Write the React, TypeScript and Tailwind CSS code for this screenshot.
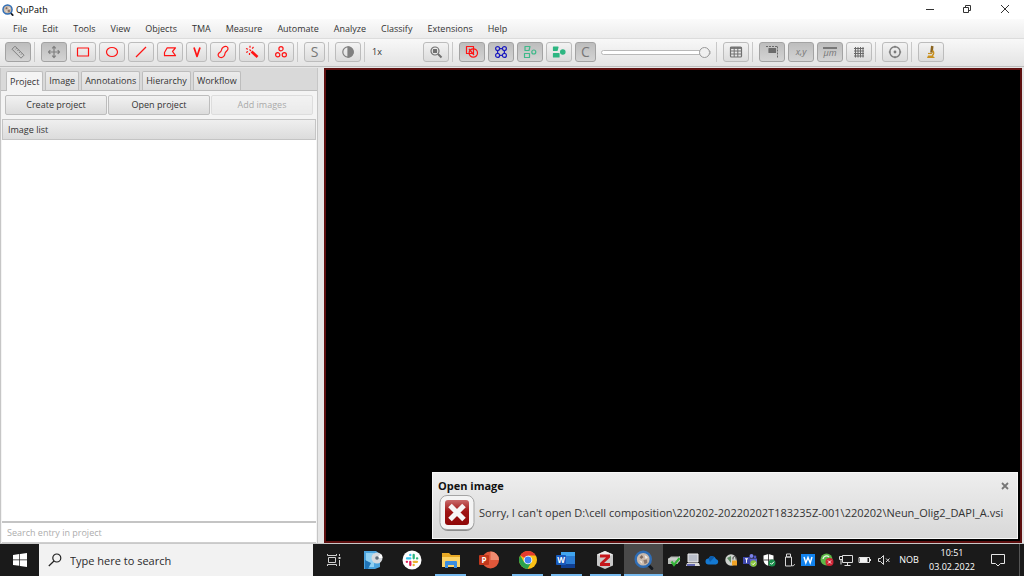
import { ReactNode, useState } from "react";
import clsx from "clsx";

const menus = [
  "File", "Edit", "Tools", "View", "Objects", "TMA", "Measure",
  "Automate", "Analyze", "Classify", "Extensions", "Help",
];

const tabs = ["Project", "Image", "Annotations", "Hierarchy", "Workflow"];

interface IconProps {
  children: ReactNode;
  color?: string;
}

/* 14px line icon used on the toolbar */
function Icon({ children, color = "text-[#ff1414]" }: IconProps) {
  return (
    <svg
      viewBox="0 0 14 14"
      className={clsx("w-3.5 h-3.5", color)}
      fill="none"
      stroke="currentColor"
      strokeWidth="1.2"
      strokeLinejoin="round"
      aria-hidden="true"
    >
      {children}
    </svg>
  );
}

interface ToolProps {
  label: string;
  children: ReactNode;
  pressed?: boolean;
  narrow?: boolean;
}

function Tool({ label, children, pressed, narrow }: ToolProps) {
  return (
    <button
      aria-label={label}
      aria-pressed={pressed}
      className={clsx(
        "h-5 shrink-0 flex items-center justify-center rounded-[3px] border",
        narrow ? "w-[21px]" : "w-[26px]",
        pressed
          ? "border-[#a3a3a3] bg-linear-to-b from-[#bdbdbd] to-[#d4d4d4]"
          : "border-[#bcbcbc] bg-linear-to-b from-[#f3f3f3] to-[#dcdcdc]"
      )}
    >
      {children}
    </button>
  );
}

function Divider() {
  return <div className="w-1 h-5 shrink-0 border-l border-[#c8c8c8]" />;
}

function QuPathLogo({ className }: { className: string }) {
  return (
    <svg viewBox="0 0 18 18" className={className} aria-hidden="true">
      <path d="M12.5 13l3.6 3.6" stroke="#15191f" strokeWidth="2.6" strokeLinecap="round" />
      <circle cx="8.3" cy="8.3" r="6.8" fill="#c9b9ab" stroke="#2f6db5" strokeWidth="2.2" />
      <path d="M5 6.5l2-2 1.5 2L6.5 8z" fill="#7d6a60" />
      <path d="M9.5 4.5l3 2-2 1.5z" fill="#f1ece8" />
      <path d="M8.5 9l3.2-.5.3 3-2.5 1.4z" fill="#8a766c" />
      <path d="M4.5 9.5l2.5.5.6 2.6z" fill="#eee6df" />
    </svg>
  );
}

function TitleBar() {
  return (
    <header className="h-[19px] shrink-0 flex items-center bg-white pl-0.5">
      <QuPathLogo className="w-3 h-3" />
      <h1 className="ml-0.5 text-black">QuPath</h1>
      <div className="ml-auto flex h-[18px] self-start text-[#333]">
        <button aria-label="Minimize" className="w-9 flex items-center justify-center">
          <svg viewBox="0 0 10 10" className="w-2.5 h-2.5" stroke="currentColor">
            <path d="M1 5.5h8" />
          </svg>
        </button>
        <button aria-label="Restore" className="w-[38px] flex items-center justify-center">
          <svg viewBox="0 0 10 10" className="w-2.5 h-2.5" stroke="currentColor" fill="none">
            <path d="M1.5 3.5h5v5h-5zM3.5 3.5v-2h5v5h-2" />
          </svg>
        </button>
        <button aria-label="Close" className="w-[38px] flex items-center justify-center">
          <svg viewBox="0 0 10 10" className="w-2.5 h-2.5" stroke="currentColor">
            <path d="M1 1l8 8M9 1l-8 8" />
          </svg>
        </button>
      </div>
    </header>
  );
}

function MenuBar() {
  return (
    <nav className="h-5 shrink-0 flex items-center gap-[15px] pl-[13px] bg-linear-to-b from-[#fbfbfb] to-[#ececec] border-b border-[#dcdcdc]">
      {menus.map((item) => (
        <button key={item}>{item}</button>
      ))}
    </nav>
  );
}

function Toolbar() {
  const [opacity, setOpacity] = useState(100);

  return (
    <div className="h-7 shrink-0 flex items-center gap-[3px] pl-[5px] pb-px bg-linear-to-b from-[#f8f8f8] to-[#e4e4e4] border-b border-[#bdbdbd]">
      <Tool label="Show analysis panel" pressed>
        <Icon color="text-[#808080]">
          <path d="M4 1.2L13 10.2 10 13.2 1 4.2zM5.8 3L4.6 4.2M7.6 4.8L6.4 6M9.4 6.6L8.2 7.8M11.2 8.4L10 9.6" strokeWidth="1" />
        </Icon>
      </Tool>
      <Divider />
      <Tool label="Move" pressed>
        <Icon color="text-[#808080]">
          <path d="M7 1.5v11M1.5 7h11M5.2 3.3L7 1.5l1.8 1.8M5.2 10.7L7 12.5l1.8-1.8M3.3 5.2L1.5 7l1.8 1.8M10.7 5.2L12.5 7l-1.8 1.8" />
        </Icon>
      </Tool>
      <Tool label="Rectangle">
        <Icon><path d="M1.5 3h11v8h-11z" /></Icon>
      </Tool>
      <Tool label="Ellipse">
        <Icon><ellipse cx="7" cy="7" rx="5.5" ry="4.5" /></Icon>
      </Tool>
      <Tool label="Line">
        <Icon><path d="M2 12L12 2" /></Icon>
      </Tool>
      <Tool label="Polygon">
        <Icon><path d="M4.2 2.8h8.3L9.5 6.5l3 4.2H1.5V7.5z" /></Icon>
      </Tool>
      <Tool label="Polyline" narrow>
        <Icon><path d="M4 2.5l3 9 3-9" strokeWidth="1.7" /></Icon>
      </Tool>
      <Tool label="Brush">
        <Icon>
          <path d="M7.5 2C9.5.6 12.3 1.5 12 4c-.3 2-2.8 2.5-3 4.5C8.8 11 6.8 13 4.5 12.5 2 12 1.4 9.5 3 8c1.5-1.2 2.3-1.5 2.5-3 .1-1.3.8-2.2 2-3z" />
        </Icon>
      </Tool>
      <Tool label="Wand">
        <Icon>
          <path d="M6.5 6.5l6 5.5" strokeWidth="2.6" />
          <path d="M4.5 4.5l1.5 1.5M5 .8v2M1 3.5l2 .8M1.2 7.5l1.8-1M8.5 2L7.2 3.6M4.5 8v2" />
        </Icon>
      </Tool>
      <Tool label="Points">
        <Icon>
          <circle cx="7" cy="3.7" r="2.1" />
          <circle cx="3.7" cy="9.8" r="2.1" />
          <circle cx="10.3" cy="9.8" r="2.1" />
        </Icon>
      </Tool>
      <Divider />
      <Tool label="Selection mode" narrow>
        <span className="text-sm leading-4 text-[#777]">S</span>
      </Tool>
      <Divider />
      <Tool label="Brightness and contrast">
        <Icon color="text-[#808080]">
          <circle cx="7" cy="7" r="5.2" />
          <path d="M7 1.8a5.2 5.2 0 0 1 0 10.4z" fill="currentColor" />
        </Icon>
      </Tool>
      <Divider />
      <span className="w-[49px] shrink-0 pl-px">1x</span>
      <Tool label="Zoom to fit">
        <Icon color="text-[#707070]">
          <circle cx="6" cy="6" r="4" />
          <path d="M4.5 4.5h3v3h-3z" fill="currentColor" />
          <path d="M9 9l3.5 3.5" strokeWidth="2" />
        </Icon>
      </Tool>
      <Divider />
      <Tool label="Show annotations" pressed>
        <Icon>
          <path d="M1.5 1.5h7v7h-7z" />
          <circle cx="8.3" cy="8" r="4.2" />
          <path d="M4 4l5 6" />
        </Icon>
      </Tool>
      <Tool label="Show TMA grid" pressed>
        <Icon color="text-[#1c1cc0]">
          <circle cx="3.6" cy="3.6" r="2" />
          <circle cx="10.4" cy="3.6" r="2" />
          <circle cx="3.6" cy="10.4" r="2" />
          <circle cx="10.4" cy="10.4" r="2" />
          <path d="M5.6 3.6h2.8M5.6 10.4h2.8M3.6 5.6v2.8M10.4 5.6v2.8" />
        </Icon>
      </Tool>
      <Tool label="Show detections" pressed>
        <Icon color="text-[#3fb98a]">
          <path d="M2 1.5h5l-1 4H2zM1.5 8.5h5v4h-5z" />
          <circle cx="10.8" cy="7" r="2" />
        </Icon>
      </Tool>
      <Tool label="Fill detections">
        <Icon color="text-[#2eb682]">
          <path d="M1.5 2H6L5 5.500H1.500zM1.500 8.500H7V12H1.500z" fill="currentColor" />
          <circle cx="10.8" cy="7" r="2.2" fill="currentColor" />
        </Icon>
      </Tool>
      <Tool label="Show pixel classification" pressed narrow>
        <span className="text-sm leading-4 text-[#777]">C</span>
      </Tool>
      <input
        type="range"
        aria-label="Overlay opacity"
        value={opacity}
        onChange={(e) => setOpacity(Number(e.target.value))}
        className="w-[110px] mx-0.5 h-3 shrink-0 appearance-none bg-transparent [&::-webkit-slider-runnable-track]:h-[5px] [&::-webkit-slider-runnable-track]:rounded-full [&::-webkit-slider-runnable-track]:border [&::-webkit-slider-runnable-track]:border-[#b9b9b9] [&::-webkit-slider-runnable-track]:bg-white [&::-webkit-slider-thumb]:appearance-none [&::-webkit-slider-thumb]:-mt-1 [&::-webkit-slider-thumb]:size-[11px] [&::-webkit-slider-thumb]:rounded-full [&::-webkit-slider-thumb]:border [&::-webkit-slider-thumb]:border-[#999] [&::-webkit-slider-thumb]:bg-[#f0f0f0]"
      />
      <Divider />
      <Tool label="Measurement table">
        <Icon color="text-[#707070]">
          <rect x="1.5" y="2" width="11" height="10" rx="1" />
          <path d="M1.5 3h11" strokeWidth="1.8" />
          <path d="M1.5 6h11M1.5 9h11M5.2 2v10M8.8 2v10" strokeWidth="1" />
        </Icon>
      </Tool>
      <Divider />
      <Tool label="Show overview" pressed>
        <Icon color="text-[#6a6a6a]">
          <path d="M1 1.5h12M12.5 1.5v11" strokeDasharray="2 1" strokeWidth="1" />
          <path d="M4 3.5h6.500v4H4z" fill="currentColor" />
        </Icon>
      </Tool>
      <Tool label="Show cursor location" pressed>
        <span className="leading-3 italic text-[#777]">x,y</span>
      </Tool>
      <Tool label="Show scale bar" pressed>
        <span className="border-t-2 border-[#777] leading-2 italic text-[#777]">µm</span>
      </Tool>
      <Tool label="Show grid">
        <Icon color="text-[#6a6a6a]">
          <path d="M2 3.5h10M2 6h10M2 8.5h10M2 11h10M3.5 2v10.5M6 2v10.5M8.5 2v10.5M11 2v10.5" strokeWidth="1" />
        </Icon>
      </Tool>
      <Divider />
      <Tool label="Preferences">
        <Icon color="text-[#7a7a7a]">
          <circle cx="7" cy="7" r="5.2" strokeWidth="1.4" />
          <circle cx="7" cy="7" r="1.4" fill="currentColor" stroke="none" />
          <path d="M7 .8v2M7 11.2v2M.8 7h2M11.2 7h2" />
        </Icon>
      </Tool>
      <Divider />
      <Tool label="Workflow help">
        <Icon color="text-[#c8901e]">
          <path d="M7 .8l2.5.4-.8 6.500-2.500-.2z" fill="#8a6420" stroke="none" />
          <path d="M8.5 5.5c1.6 1.5 1.5 4-.4 5.3" strokeWidth="1.6" />
          <path d="M4 8.5h4" />
          <path d="M4 10.5h4.5L11 13H3z" fill="currentColor" stroke="none" />
        </Icon>
      </Tool>
    </div>
  );
}

function SidePanel() {
  const [active, setActive] = useState("Project");
  const projectButton =
    "flex-1 h-5 rounded-[2px] border border-[#bdbdbd] bg-linear-to-b from-[#f2f2f2] to-[#dcdcdc]";

  return (
    <aside className="w-[318px] shrink-0 flex flex-col border-x border-[#c6c6c6] bg-[#f4f4f4]">
      <div role="tablist" className="h-[23px] shrink-0 flex items-end gap-0.5 pl-[5px] bg-[#d9d9d9] border-b border-[#bdbdbd]">
        {tabs.map((tab) => (
          <button
            key={tab}
            role="tab"
            aria-selected={tab === active}
            onClick={() => setActive(tab)}
            className={clsx(
              "px-[3px] rounded-t-[2px] border border-b-0 border-[#bdbdbd]",
              tab === active ? "-mb-px h-5 bg-[#f4f4f4]" : "h-[19px] bg-linear-to-b from-[#ebebeb] to-[#dedede]"
            )}
          >
            {tab}
          </button>
        ))}
      </div>

      <div className="flex gap-px px-1 py-1">
        <button className={projectButton}>Create project</button>
        <button className={projectButton}>Open project</button>
        <button disabled className={clsx(projectButton, "opacity-40")}>Add images</button>
      </div>

      <h2 className="h-[21px] shrink-0 flex items-center mx-px pl-[5px] border border-[#c4c4c4] bg-linear-to-b from-[#efefef] to-[#dcdcdc]">
        Image list
      </h2>
      <div className="flex-1 mx-px bg-white border-b-2 border-[#c4c4c4]" />
      <input
        type="text"
        aria-label="Search entry in project"
        placeholder="Search entry in project"
        className="h-5 shrink-0 mx-px pl-[5px] bg-white border-b border-[#cfcfcf] placeholder:text-[#adadad] outline-none"
      />
    </aside>
  );
}

function Notification() {
  return (
    <div
      role="alert"
      className="absolute right-0.5 bottom-0.5 w-[586px] h-[67px] flex flex-col border border-[#f8f8f8] bg-linear-to-b from-[#eeeeee] to-[#d8d8d8] pl-[5px] pt-[5px]"
    >
      <div className="flex items-center justify-between pr-2">
        <h2 className="text-[11px] leading-4 font-bold text-[#111]">Open image</h2>
        <button aria-label="Dismiss" className="text-[#777]">
          <svg viewBox="0 0 8 8" className="w-2 h-2" stroke="currentColor" strokeWidth="1.8">
            <path d="M1 1l6 6M7 1L1 7" />
          </svg>
        </button>
      </div>
      <div className="flex items-center gap-1">
        <svg viewBox="0 0 36 38" className="w-9 h-[38px] shrink-0 ml-px" aria-hidden="true">
          <defs>
            <linearGradient id="err" x1="0" y1="0" x2="0" y2="1">
              <stop offset="0" stopColor="#c96a6a" />
              <stop offset="0.45" stopColor="#a01414" />
              <stop offset="1" stopColor="#8e0606" />
            </linearGradient>
          </defs>
          <rect x="1" y="2" width="34" height="35" rx="8" fill="#8d8d8d" />
          <rect x="1" y="1.5" width="34" height="34" rx="7" fill="#f4f4f4" stroke="#a5a5a5" />
          <rect x="6" y="6" width="24" height="25" rx="3" fill="url(#err)" />
          <path d="M11 11.5l14 14M25 11.5l-14 14" stroke="#f6f6f6" strokeWidth="5" />
        </svg>
        <p className="text-[11px] text-[#333] whitespace-nowrap">
          Sorry, I can't open D:\cell composition\220202-20220202T183235Z-001\220202\Neun_Olig2_DAPI_A.vsi
        </p>
      </div>
    </div>
  );
}

const apps = [
  {
    name: "Scanner",
    art: (
      <>
        <path d="M1 1h12l4 3v13l-5 2H1z" fill="#4ba3dd" />
        <path d="M3 3h8v14H3z" fill="#8fd0f2" />
        <path d="M2 10l6 3-3 6H2z" fill="#1f74b8" />
        <circle cx="14" cy="8" r="5.5" fill="#d5d9dd" />
        <path d="M14 8l4-4a6 6 0 0 1 1.5 4z" fill="#fff" />
        <circle cx="14" cy="8" r="1.8" fill="#5c6b78" />
      </>
    ),
  },
  {
    name: "Slack",
    art: (
      <>
        <circle cx="10" cy="10" r="9.5" fill="#fff" />
        <g strokeWidth="2.3" strokeLinecap="round">
          <path d="M8.3 5v.2M5 8.4h3.3" stroke="#36c5f0" />
          <path d="M11.7 8.3V5M15.2 8.4H15" stroke="#2eb67d" />
          <path d="M11.7 11.8H15M11.7 15.2V15" stroke="#ecb22e" />
          <path d="M8.3 11.8V15M4.8 11.8H5" stroke="#e01e5a" />
        </g>
      </>
    ),
  },
  {
    name: "File Explorer",
    open: true,
    art: (
      <>
        <path d="M1 3h7l2 2h9v12H1z" fill="#e8a925" />
        <path d="M1 7h18v10H1z" fill="#fbd368" />
        <path d="M4 18v-6q0-1 1-1h10q1 0 1 1v6h-3v-3H7v3z" fill="#3a8ee0" />
      </>
    ),
  },
  {
    name: "PowerPoint",
    art: (
      <>
        <circle cx="11.5" cy="10" r="8.5" fill="#e0573a" />
        <path d="M11.5 1.5A8.5 8.5 0 0 1 20 10h-8.5z" fill="#f08b70" />
        <rect x="0" y="5" width="10" height="10" rx="1" fill="#c2371c" />
        <text x="5" y="13" fontSize="8" fontWeight="bold" textAnchor="middle" fill="#fff">P</text>
      </>
    ),
  },
  {
    name: "Chrome",
    open: true,
    art: (
      <>
        <circle cx="10" cy="10" r="9" fill="#fbc116" />
        <path d="M10 10L2.2 5.5A9 9 0 0 1 17.8 5.5H10z" fill="#e33b2e" />
        <path d="M2.2 5.5A9 9 0 0 0 9.5 19l4-7L6 12z" fill="#2aa24c" />
        <circle cx="10" cy="10" r="4.3" fill="#fff" />
        <circle cx="10" cy="10" r="3.4" fill="#3f83f0" />
      </>
    ),
  },
  {
    name: "Word",
    open: true,
    art: (
      <>
        <rect x="5" y="2" width="14" height="16" rx="1" fill="#2b7cd3" />
        <path d="M5 2h14v4H5z" fill="#41a5ee" />
        <path d="M5 14h14v4H5z" fill="#103f91" />
        <rect x="0" y="5" width="10" height="10" rx="1" fill="#185abd" />
        <text x="5" y="13" fontSize="8" fontWeight="bold" textAnchor="middle" fill="#fff">W</text>
      </>
    ),
  },
  {
    name: "Zotero",
    open: true,
    art: (
      <>
        <path d="M10 1l8 3.5v11L10 19l-8-3.500v-11z" fill="#c9c9c9" />
        <path d="M10 1l8 3.5L10 8 2 4.500z" fill="#ededed" />
        <path d="M5 4.5h10v3L9 13h6v3H5v-3l6-5.500H5z" fill="#c4161c" />
      </>
    ),
  },
];

const trayIcons = [
  {
    name: "Safely remove",
    art: (
      <>
        <path d="M1 6l3-2.5h9V8l-3 3H1z" fill="#b9bdb9" />
        <path d="M1 6h9v5M10 6l3-2.5" stroke="#e6e8e6" fill="none" strokeWidth=".8" />
        <path d="M4.5 8.5L7 12l5.5-7" stroke="#35b53a" strokeWidth="2.2" fill="none" />
      </>
    ),
  },
  {
    name: "Display",
    art: (
      <>
        <path d="M2 1h10v8H2z" fill="#b9bec9" stroke="#eee" />
        <path d="M1 10h12l1 3H0z" fill="#dadada" />
        <path d="M1 12h8" stroke="#3b429f" strokeWidth="1.5" />
      </>
    ),
  },
  {
    name: "OneDrive",
    art: (
      <>
        <path d="M3.5 11.5a3 3 0 0 1 0-6A4 4 0 0 1 11 6a2.8 2.8 0 0 1 0 5.5z" fill="#1479d2" />
        <path d="M3.5 5.5A4 4 0 0 1 9.5 4L5 9z" fill="#0b5bab" />
      </>
    ),
  },
  {
    name: "VPN",
    art: (
      <>
        <circle cx="7" cy="7" r="5.7" fill="#cfd3cf" />
        <path d="M3 5l4-2v7z" fill="#5f8d66" />
        <path d="M9 6.5V5a1.5 1.5 0 0 1 3 0v1.5" stroke="#444" fill="none" />
        <rect x="8" y="7.5" width="5" height="5" fill="#f0a326" />
      </>
    ),
  },
  {
    name: "Teams",
    art: (
      <>
        <circle cx="8.5" cy="3" r="2" fill="#7b83eb" />
        <circle cx="12" cy="4" r="1.4" fill="#5059c9" />
        <path d="M6 5.5h8v4a4 4 0 0 1-8 0z" fill="#5b63cf" />
        <path d="M0 4h7v7H0z" fill="#3f48ad" />
        <path d="M2 5.8h3M3.5 5.8v4" stroke="#fff" />
        <circle cx="10.5" cy="10.5" r="3.2" fill="#87c53c" />
        <path d="M9 10.5l1.2 1.2 2-2.3" stroke="#fff" fill="none" />
      </>
    ),
  },
  {
    name: "Windows Security",
    art: (
      <>
        <path d="M6.5 1l5 1.5V7c0 3-2 5-5 6-3-1-5-3-5-6V2.500z" fill="#fff" />
        <path d="M6.5 1v12M1.5 7h10" stroke="#222" strokeWidth=".8" />
        <circle cx="10" cy="10" r="3.5" fill="#1a8f4b" />
        <path d="M8.3 10l1.3 1.3L12 8.7" stroke="#fff" fill="none" />
      </>
    ),
  },
  {
    name: "USB",
    art: (
      <path d="M4.5 1h4v3h-4zM3.5 4h6v9h-6zM9.5 12.5c2 1 3-.5 3-1.5" stroke="#d8d8d8" fill="none" />
    ),
  },
  {
    name: "W",
    art: (
      <>
        <path d="M0 1h14v12H0z" fill="#1283ee" />
        <path d="M3 4l1.8 6L7 4.5 9.2 10 11 4" stroke="#fff" strokeWidth="1.4" fill="none" />
      </>
    ),
  },
  {
    name: "Sync error",
    art: (
      <>
        <circle cx="6.5" cy="6.5" r="6" fill="#5cb947" />
        <path d="M3 6a3.5 3.5 0 0 1 6-2" stroke="#e8f5e4" strokeWidth="1.4" fill="none" />
        <circle cx="9.5" cy="9" r="4" fill="#cf2435" />
        <path d="M8 7.5l3 3M11 7.5l-3 3" stroke="#fff" />
      </>
    ),
  },
  {
    name: "Network",
    art: (
      <path d="M3.5 2.5h10v7h-10zM8.5 9.5V12M5.5 12.5h6M.5 3.5h3v3h-3zM2 6.5v5" stroke="#ddd" fill="none" />
    ),
  },
  {
    name: "Battery",
    art: (
      <>
        <path d="M1 4.5h10.5v5H1zM12.5 6v2" stroke="#e5e5e5" fill="none" />
        <path d="M2 5h7.5v4H2z" fill="#f2f2f2" />
      </>
    ),
  },
  {
    name: "Volume",
    art: (
      <path d="M1.5 5.5h2l3-3v9l-3-3h-2zM9 5.5L12.5 9M12.5 5.5L9 9" stroke="#ddd" fill="none" />
    ),
  },
];

function Taskbar() {
  return (
    <footer className="h-[33px] shrink-0 flex items-stretch bg-[#1a1a1a] text-white border-t border-[#c9c9c9]">
      <button aria-label="Start" className="w-[39px] shrink-0 flex items-center justify-center">
        <svg viewBox="0 0 14 14" className="w-3.5 h-3.5" fill="#fff">
          <path d="M0 2l6.3-.9v5.500H0zM7 1l7-1v6.600H7zM0 7.300h6.300v5.500L0 12zM7 7.300h7V14l-7-1z" />
        </svg>
      </button>
      <label className="w-[274px] shrink-0 flex items-center gap-2 pl-[9px] bg-[#f2f2f2] text-[#222]">
        <svg viewBox="0 0 14 14" className="w-3.5 h-3.5 shrink-0" fill="none" stroke="#222" strokeWidth="1.2" aria-hidden="true">
          <circle cx="8.8" cy="5" r="4" />
          <path d="M6 8L.8 13" />
        </svg>
        <input
          type="text"
          aria-label="Type here to search"
          placeholder="Type here to search"
          className="flex-1 min-w-0 h-full text-[11px] bg-transparent outline-none placeholder:text-[#2b2b2b]"
        />
      </label>
      <button aria-label="Task View" className="w-[41px] shrink-0 flex items-center justify-center">
        <svg viewBox="0 0 14 14" className="w-3.5 h-3.5" fill="none" stroke="#d0d0d0">
          <path d="M1.5 4.5h7v5h-7zM.5 1v1.5h9V1M.5 13v-1.5h9V13M12.5 1v2M12.5 7v6" />
          <path d="M12.5 4v2" strokeWidth="2" />
        </svg>
      </button>

      <div className="w-[309px] shrink-0 grid grid-cols-8">
        {apps.map((app) => (
          <button
            key={app.name}
            aria-label={app.name}
            className="flex flex-col items-center justify-end gap-1"
          >
            <svg viewBox="0 0 20 20" className="w-5 h-5">{app.art}</svg>
            <span className={clsx("w-[31px] h-0.5", app.open && "bg-[#76b9ed]")} />
          </button>
        ))}
        <button aria-label="QuPath" className="flex flex-col items-center justify-end gap-1 bg-[#4a4a4a]">
          <QuPathLogo className="w-5 h-5" />
          <span className="w-full h-0.5 bg-[#76b9ed]" />
        </button>
      </div>

      <div className="ml-auto flex items-center">
        <div className="w-[230px] grid grid-cols-12 justify-items-center">
          {trayIcons.map((icon) => (
            <button key={icon.name} aria-label={icon.name}>
              <svg viewBox="0 0 14 14" className="w-3.5 h-3.5">{icon.art}</svg>
            </button>
          ))}
        </div>
        <button className="w-[30px] text-center">NOB</button>
        <button className="w-[56px] text-center leading-3.5">
          10:51
          <br />
          03.02.2022
        </button>
        <button aria-label="Notifications" className="w-10 pr-1 self-stretch flex items-center justify-center border-r border-[#555] mr-1">
          <svg viewBox="0 0 14 14" className="w-3.5 h-3.5" fill="none" stroke="#e6e6e6">
            <path d="M.5 1.5h13v9h-4L7 13l-2.500-2.500h-4z" />
          </svg>
        </button>
      </div>
    </footer>
  );
}

export default function App() {
  return (
    <div className="h-screen flex flex-col overflow-hidden bg-[#e6e6e6] font-['Open_Sans','Noto_Sans',sans-serif] text-[9px] leading-4 text-[#333]">
      <TitleBar />
      <MenuBar />
      <Toolbar />
      <div className="flex-1 min-h-0 flex gap-1.5 pr-0.5 pt-px">
        <SidePanel />
        <main className="relative flex-1 border-2 border-[#5e1010] bg-black">
          <Notification />
        </main>
      </div>
      <Taskbar />
    </div>
  );
}
